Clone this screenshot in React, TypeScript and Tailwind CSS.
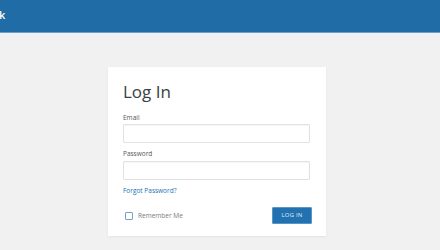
const font = "font-['Open_Sans','Noto_Sans',sans-serif]"

export default function App() {
	return (
		<div className={`min-h-[250px] bg-[#f1f1f1] ${font}`}>
			{/* top bar, brand name cut off at the left edge */}
			<header className="h-[33px] bg-[#206ca6] border-b border-[#6a9fcb] flex items-center">
				<span className="text-white text-[11px] font-semibold -ml-[1px] -mt-[2px]">k</span>
			</header>

			<div className="pt-[34px]">
				<div className="ml-[108px] w-[218px] bg-white shadow-[0_1px_2px_rgba(0,0,0,0.06)] pt-[13px] px-[15px] pb-[12px]">
					<h1 className="text-[17px] leading-[24px] text-[#3a3f44]">Log In</h1>

					<label className="block mt-[9px] mb-[1px] text-[6.5px] leading-[10px] text-[#555]">Email</label>
					<input
						type="email"
						className="block w-[187px] h-[19px] border border-[#e2e2e2] rounded-[1px] shadow-[inset_0_1px_1px_rgba(0,0,0,0.04)] outline-none"
					/>

					<label className="block mt-[6px] mb-[2px] text-[6.5px] leading-[10px] text-[#555]">Password</label>
					<input
						type="password"
						className="block w-[187px] h-[19px] border border-[#e2e2e2] rounded-[1px] shadow-[inset_0_1px_1px_rgba(0,0,0,0.04)] outline-none"
					/>

					<a className="block mt-[6px] text-[6.5px] leading-[10px] text-[#2271b1]">Forgot Password?</a>

					<div className="mt-[11px] flex items-center justify-between">
						<label className="flex items-center gap-[5px] ml-[2px]">
							<span className="w-[8px] h-[8px] border border-[#7a9fc6] bg-white rounded-[1px]" />
							<span className="text-[6.5px] text-[#7a7a7a]">Remember Me</span>
						</label>
						<button className="w-[40px] h-[17px] bg-[#2271b1] border border-[#5b95c6] rounded-[1px] text-[6px] text-[#e3edf6] tracking-[0.2px] mr-[-1px]">
							LOG IN
						</button>
					</div>
				</div>
			</div>
		</div>
	)
}
